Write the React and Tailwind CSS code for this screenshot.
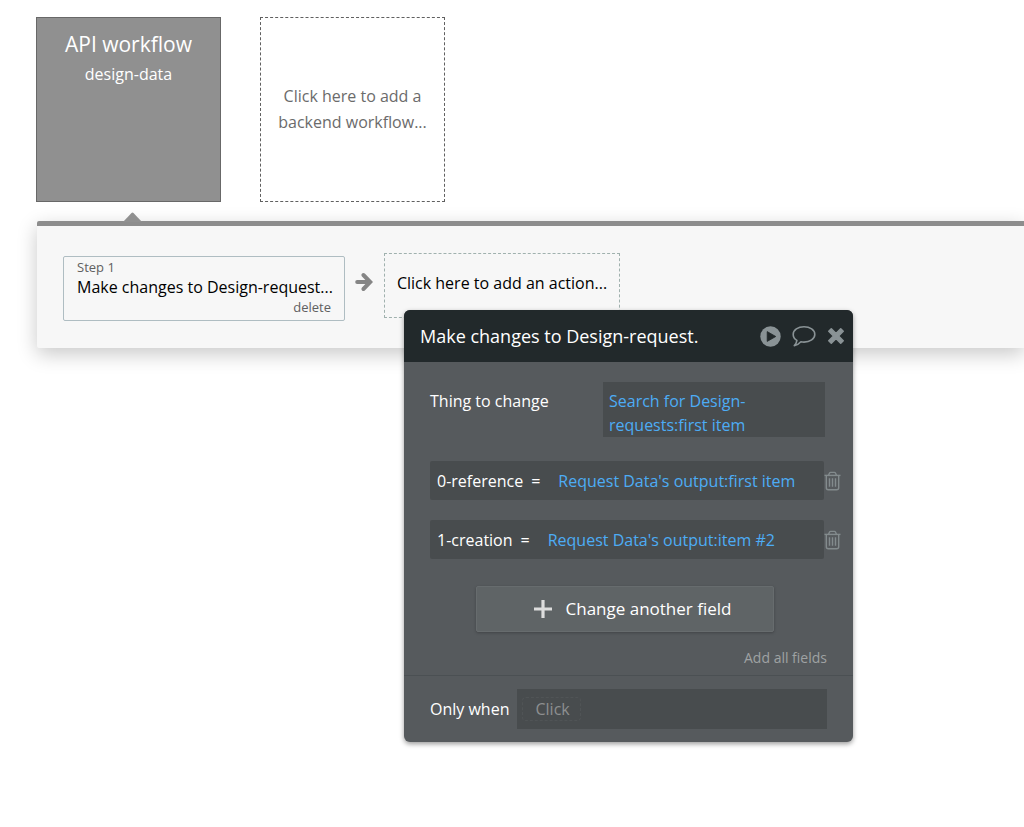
import React from "react";

function ArrowIcon() {
  return (
    <svg width="18" height="20" viewBox="0 0 18 20" fill="none" stroke="#858585" strokeWidth="4" strokeLinecap="round" strokeLinejoin="miter" aria-hidden="true">
      <path d="M2.2 10H14" />
      <path d="M8.4 3L15.2 10L8.4 17" />
    </svg>
  );
}

function PlayIcon() {
  return (
    <svg width="21" height="21" viewBox="0 0 21 21" aria-hidden="true">
      <circle cx="10.5" cy="10.5" r="10.2" fill="#8a9396" />
      <path d="M7.2 5.6L15.8 10.5L7.2 15.4Z" fill="#22292b" stroke="#22292b" strokeWidth="0.8" strokeLinejoin="round" />
    </svg>
  );
}

function CommentIcon() {
  return (
    <svg width="24" height="22" viewBox="0 0 24 22" fill="none" stroke="#8a9396" strokeWidth="1.6" strokeLinejoin="round" aria-hidden="true">
      <path d="M12 1.7C18 1.7 22.8 5.1 22.8 9.4C22.8 13.7 18 17.1 12 17.1C10.9 17.1 9.9 17 8.9 16.8C7.1 18.9 4.9 20.2 2.3 20.6C3.7 19.3 4.6 17.5 4.9 15.4C2.6 14 1.2 11.9 1.2 9.4C1.2 5.1 6 1.7 12 1.7Z" />
    </svg>
  );
}

function CloseIcon() {
  return (
    <svg width="18" height="18" viewBox="0 0 18 18" fill="#8a9396" stroke="#8a9396" strokeWidth="1.6" strokeLinejoin="round" aria-hidden="true">
      <path d="M4.3 1.8L9 6.5L13.7 1.8L16.2 4.3L11.5 9L16.2 13.7L13.7 16.2L9 11.5L4.3 16.2L1.8 13.7L6.5 9L1.8 4.3Z" />
    </svg>
  );
}

function TrashIcon() {
  return (
    <svg width="17" height="20" viewBox="0 0 17 20" fill="none" stroke="#838b8d" strokeWidth="1.4" aria-hidden="true">
      <path d="M0.5 4.4H16.5" />
      <path d="M4.6 4.2L5.4 2.2Q5.8 1.4 6.6 1.4H10.4Q11.2 1.4 11.6 2.2L12.4 4.2" />
      <path d="M2.3 4.4V16.8Q2.3 18.8 4.3 18.8H12.7Q14.7 18.8 14.7 16.8V4.4" />
      <path d="M5.5 7.2V15.8M8.5 7.2V15.8M11.5 7.2V15.8" />
    </svg>
  );
}

function FieldRow({ name, value }) {
  return (
    <div className="flex items-center">
      <div className="flex h-[39px] flex-1 items-center rounded-xs bg-[#484c4e] pl-[7px] whitespace-nowrap">
        <span className="text-white">{name}</span>
        <span className="ml-2 text-white">=</span>
        <button type="button" className="ml-[18px] text-[#4dacf5]">{value}</button>
      </div>
      <button type="button" aria-label={`Remove ${name}`} className="shrink-0">
        <TrashIcon />
      </button>
    </div>
  );
}

function PropertyEditor() {
  return (
    <section className="absolute top-[57px] left-5 z-10 w-[449px] rounded-md bg-[#565a5d] text-base leading-6 text-white shadow-[0_2px_5px_rgba(0,0,0,0.4)]">
      <header className="flex h-[52px] items-center rounded-t-md bg-[#22292b] pr-2 pl-4">
        <h2 className="flex-1 text-lg">Make changes to Design-request.</h2>
        <div className="flex items-center gap-[11px]">
          <button type="button" aria-label="Run"><PlayIcon /></button>
          <button type="button" aria-label="Comment"><CommentIcon /></button>
          <button type="button" aria-label="Close"><CloseIcon /></button>
        </div>
      </header>

      <div className="pt-5 pr-3 pl-[26px]">
        <div className="flex justify-between pr-4">
          <span className="pt-[7px]">Thing to change</span>
          <button type="button" className="w-[222px] bg-[#484c4e] pt-[7px] pr-10 pl-1.5 text-left text-[#4dacf5]">
            Search for Design-requests:first item
          </button>
        </div>
        <div className="mt-6 flex flex-col gap-5">
          <FieldRow name="0-reference" value="Request Data's output:first item" />
          <FieldRow name="1-creation" value="Request Data's output:item #2" />
        </div>
      </div>

      <div className="mt-[27px] flex justify-center pr-2">
        <button type="button" className="flex h-[46px] w-[298px] items-center justify-center gap-3.5 rounded-xs border border-[#676c6e] bg-[#5f6466] pl-4 text-[17px] shadow-[0_1px_3px_rgba(0,0,0,0.25)]">
          <svg width="18" height="18" viewBox="0 0 18 18" stroke="#dddddd" strokeWidth="3.2" aria-hidden="true">
            <path d="M0 9H18M9 0V18" />
          </svg>
          Change another field
        </button>
      </div>

      <div className="mt-4 flex justify-end pr-[26px]">
        <button type="button" className="text-sm leading-5 text-[#9fa2a3]">Add all fields</button>
      </div>

      <div className="mt-[7px] flex items-center gap-2 border-t border-[#4b5053] px-[26px] py-[13px]">
        <label htmlFor="only-when" className="whitespace-nowrap">Only when</label>
        <div className="flex h-10 flex-1 items-center bg-[#484c4e] pl-[5px]">
          <input id="only-when" placeholder="Click" className="h-6 w-[59px] rounded-sm border border-dashed border-[#505456] bg-transparent pl-3 placeholder:text-[#8d8f90] placeholder:opacity-100 focus:outline-none" />
        </div>
      </div>
    </section>
  );
}

export default function App() {
  return (
    <main className="min-h-screen overflow-x-hidden bg-white pt-[17px] pl-9 font-['Open_Sans','Noto_Sans',sans-serif]">
      <div className="flex gap-[39px]">
        <button type="button" className="flex size-[185px] shrink-0 flex-col items-center border border-[#686868] bg-[#909090] pt-[11px] text-white">
          <span className="text-[21px] leading-[30px]">API workflow</span>
          <span className="text-base leading-[30px]">design-data</span>
        </button>
        <button type="button" className="flex size-[185px] shrink-0 items-center justify-center border border-dashed border-[#606060] px-3 pb-0.5 text-base leading-[26px] text-[#6b6b6b]">
          <span>Click here to add a<br />backend workflow...</span>
        </button>
      </div>

      <section className="relative mt-[19px] ml-px h-[127px] rounded-l-xs border-t-[5px] border-[#8d8d8d] bg-[#f7f7f7] shadow-[0_6px_20px_rgba(0,0,0,0.22)]">
        <svg className="absolute -top-[14px] left-[86px]" width="19" height="10" viewBox="0 0 19 10" aria-hidden="true">
          <path d="M0 10L8.5 1Q9.5 0 10.5 1L19 10Z" fill="#909090" />
        </svg>
        <div className="flex items-start pt-[27px] pl-[26px]">
          <article className="mt-[3px] flex h-[65px] w-[282px] shrink-0 flex-col justify-center rounded-xs border border-[#afbdc2] px-[13px] pb-1 whitespace-nowrap">
            <span className="text-[13px] leading-5 text-[#606060]">Step 1</span>
            <button type="button" className="text-left text-base leading-5 text-black">Make changes to Design-request...</button>
            <button type="button" className="self-end text-[13px] leading-5 text-[#606060]">delete</button>
          </article>
          <div className="mt-[19px] ml-2.5 shrink-0"><ArrowIcon /></div>
          <div className="relative ml-[11px] shrink-0">
            <button type="button" className="flex h-[65px] w-[236px] items-center justify-center border border-dashed border-[#a0b1ae] pb-[5px] text-base whitespace-nowrap text-black">
              Click here to add an action...
            </button>
            <PropertyEditor />
          </div>
        </div>
      </section>
    </main>
  );
}
